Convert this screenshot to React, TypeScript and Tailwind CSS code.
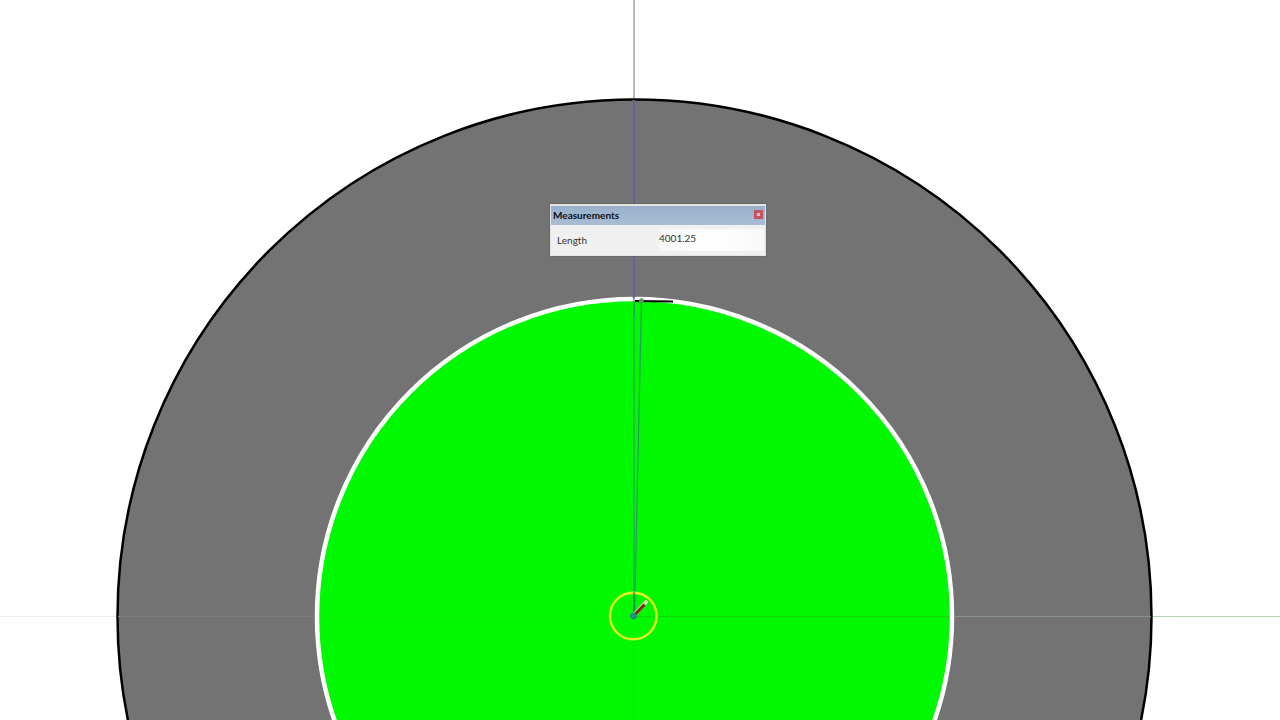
export default function App() {
  return (
    <div className="relative h-screen w-full overflow-hidden bg-white">
      {/* Model canvas */}
      <svg className="absolute inset-0 block" width="1280" height="720" viewBox="0 0 1280 720">
        <circle cx="634.5" cy="616.5" r="517" fill="#737373" stroke="#000" strokeWidth="2.5" />
        <circle cx="634.5" cy="616.5" r="317.5" fill="#00f800" stroke="#fff" strokeWidth="4.5" />

        {/* axes */}
        <line x1="634" y1="0" x2="634" y2="98" stroke="#72728c" strokeWidth="1" />
        <line x1="634" y1="100" x2="634" y2="298" stroke="#77779c" strokeWidth="2.5" />
        <line x1="634" y1="100" x2="634" y2="298" stroke="#505088" strokeWidth="1" />
        <line x1="634" y1="298" x2="634" y2="316" stroke="#3a50a0" strokeWidth="1" />
        <line x1="634" y1="316" x2="634" y2="592" stroke="#2f8f70" strokeWidth="1" />
        <line x1="0" y1="616.5" x2="116" y2="616.5" stroke="#eeeeee" strokeWidth="1" />
        <line x1="118" y1="616.5" x2="315" y2="616.5" stroke="#7d7d7d" strokeWidth="1" />
        <line x1="320" y1="616.5" x2="632" y2="616.5" stroke="#08f008" strokeWidth="1" />
        <line x1="636" y1="616.5" x2="950" y2="616.5" stroke="#0fd80f" strokeWidth="1" />
        <line x1="955" y1="616.5" x2="1151" y2="616.5" stroke="#859585" strokeWidth="1" />
        <line x1="1153" y1="616.5" x2="1280" y2="616.5" stroke="#b8d4b8" strokeWidth="1" />
        <line x1="634" y1="640" x2="634" y2="720" stroke="#0ce80c" strokeWidth="1" />

        {/* measured edge */}
        <line x1="634.5" y1="616" x2="641.5" y2="301" stroke="#2a9a60" strokeWidth="1.2" />
        <path d="M635 301 L673 301.5" stroke="#000" strokeWidth="2" fill="none" />
        <circle cx="641.5" cy="300.8" r="2.5" fill="#4f9a55" />

        {/* tape cursor */}
        <circle cx="633.3" cy="616" r="23.3" fill="none" stroke="#e6f01e" strokeWidth="2.4" />
        <line x1="634" y1="592" x2="634" y2="612" stroke="#0b7a3a" strokeWidth="1.2" />
        <line x1="635" y1="614" x2="646" y2="602" stroke="#d8e0a0" strokeWidth="4" strokeLinecap="round" />
        <line x1="635.5" y1="614" x2="644.5" y2="604.5" stroke="#7a2a1c" strokeWidth="3" />
        <circle cx="633.5" cy="616" r="2.8" fill="#2b8fb0" stroke="#1c6a60" strokeWidth="0.8" />
      </svg>

      {/* Measurements dialog */}
      <div className="absolute left-[550px] top-[204px] flex h-[52px] w-[216px] flex-col border border-t-2 border-[#e4e4e4] bg-[#f0f0f0] font-['Lato','Open_Sans',sans-serif] shadow-[0_0_1px_#444]">
        <div className="flex h-[19px] items-center justify-between bg-gradient-to-b from-[#98b1cd] to-[#aabdd4] px-[2px] pb-[2px]">
          <span className="text-[10px] leading-none font-bold text-[#0a0f18]">Measurements</span>
          <span className="flex h-[9px] w-[9px] items-center justify-center bg-[#c4525c] text-[7px] leading-none font-bold text-white">×</span>
        </div>
        <div className="flex flex-1 items-center pl-[6px] pr-[1px]">
          <span className="w-[102px] pb-[1px] text-[10px] leading-none text-[#333]">Length</span>
          <span className="flex h-[22px] flex-1 items-center bg-gradient-to-r from-[#f6f6f6] via-white to-[#f8f8f8] pb-[4px] text-[10px] leading-none text-[#333]">4001.25</span>
        </div>
      </div>
    </div>
  );
}
